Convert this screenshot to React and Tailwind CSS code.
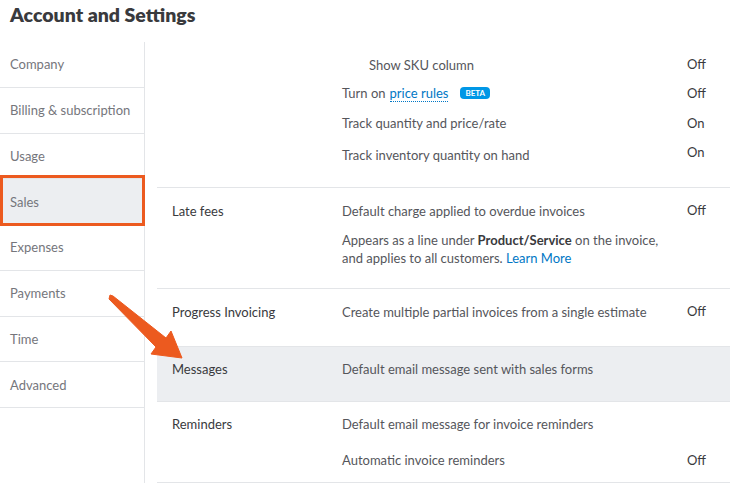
import React from "react";

const nav = ["Company", "Billing & subscription", "Usage", "Sales", "Expenses", "Payments", "Time", "Advanced"];

function Val({ children, className = "" }) {
  return <div className={`w-[43px] shrink-0 text-[#393a3d] ${className}`}>{children}</div>;
}

export default function App() {
  return (
    <div
      className="relative w-[730px] h-[483px] overflow-hidden bg-white text-[13px] leading-[18px]"
      style={{ fontFamily: "Lato, 'Open Sans', sans-serif" }}
    >
      <div className="h-[42px] pl-[10px] pt-[3px] text-[19.5px] leading-[24px] font-extrabold text-[#393a3d]">
        Account and Settings
      </div>

      <div className="flex h-[441px]">
        {/* sidebar */}
        <div className="w-[145px] shrink-0 border-r border-[#e3e5e8]">
          {nav.map((n) => (
            <div
              key={n}
              className={`relative box-border h-[45.75px] flex items-center pl-[10px] border-b border-[#e3e5e8] text-[#75767c] ${
                n === "Sales" ? "bg-[#eceef1]" : ""
              }`}
            >
              {n}
              {n === "Sales" && (
                <div className="absolute left-0 right-[-1px] top-[-4px] bottom-[-2px] border-[3px] border-[#ec5a1f]" />
              )}
            </div>
          ))}
        </div>

        {/* main */}
        <div className="flex-1 pl-[12px] text-[#55565b]">
          {/* top section */}
          <div className="border-b border-[#e3e5e8] h-[146px] pt-[14px]">
            <div className="flex pl-[185px]">
              <div className="flex-1 pl-[27px]">Show SKU column</div>
              <Val className="-mt-[1px]">Off</Val>
            </div>
            <div className="flex pl-[185px] mt-[10px]">
              <div className="flex-1 flex items-center">
                Turn on
                <span className="ml-[4px] text-[#0077c5] border-b border-dotted border-[#0077c5] leading-[16px]">price rules</span>
                <span className="ml-[12px] rounded-[4px] bg-[#0097e6] text-white text-[8px] leading-[12px] font-bold px-[5px]">
                  BETA
                </span>
              </div>
              <Val>Off</Val>
            </div>
            <div className="flex pl-[185px] mt-[12px]">
              <div className="flex-1">Track quantity and price/rate</div>
              <Val>On</Val>
            </div>
            <div className="flex pl-[185px] mt-[14px]">
              <div className="flex-1">Track inventory quantity on hand</div>
              <Val className="-mt-[3px]">On</Val>
            </div>
          </div>

          {/* late fees */}
          <div className="border-b border-[#e3e5e8] h-[101px] pt-[14px] flex">
            <div className="w-[185px] pl-[15px] text-[#393a3d]">Late fees</div>
            <div className="flex-1">
              <div>Default charge applied to overdue invoices</div>
              <div className="mt-[11px] w-[330px]">
                Appears as a line under <span className="font-bold text-[#393a3d]">Product/Service</span> on the invoice,
                and applies to all customers. <span className="text-[#0077c5]">Learn More</span>
              </div>
            </div>
            <Val className="-mt-[1px]">Off</Val>
          </div>

          {/* progress invoicing */}
          <div className="border-b border-[#e3e5e8] h-[58px] pt-[14px] flex">
            <div className="w-[185px] pl-[15px] text-[#393a3d]">Progress Invoicing</div>
            <div className="flex-1">Create multiple partial invoices from a single estimate</div>
            <Val className="-mt-[1px]">Off</Val>
          </div>

          {/* messages */}
          <div className="border-b border-[#e3e5e8] bg-[#eceef1] h-[55px] pt-[13px] flex">
            <div className="w-[185px] pl-[15px] text-[#393a3d]">Messages</div>
            <div className="flex-1">Default email message sent with sales forms</div>
            <Val />
          </div>

          {/* reminders */}
          <div className="border-b border-[#e3e5e8] h-[81px] pt-[13px] flex">
            <div className="w-[185px] pl-[15px] text-[#393a3d]">Reminders</div>
            <div className="flex-1">
              <div>Default email message for invoice reminders</div>
              <div className="mt-[18px]">Automatic invoice reminders</div>
            </div>
            <Val className="pt-[36px]">Off</Val>
          </div>
        </div>
      </div>

      {/* annotation arrow */}
      <svg className="absolute left-0 top-0 pointer-events-none" width="730" height="483">
        <polygon
          points="110,295 113,296 166,338 171,331 182,358 151,354 156,347 109,299"
          fill="#ec5a1f"
          stroke="#ec5a1f"
          strokeWidth="1"
          strokeLinejoin="round"
        />
      </svg>
    </div>
  );
}
